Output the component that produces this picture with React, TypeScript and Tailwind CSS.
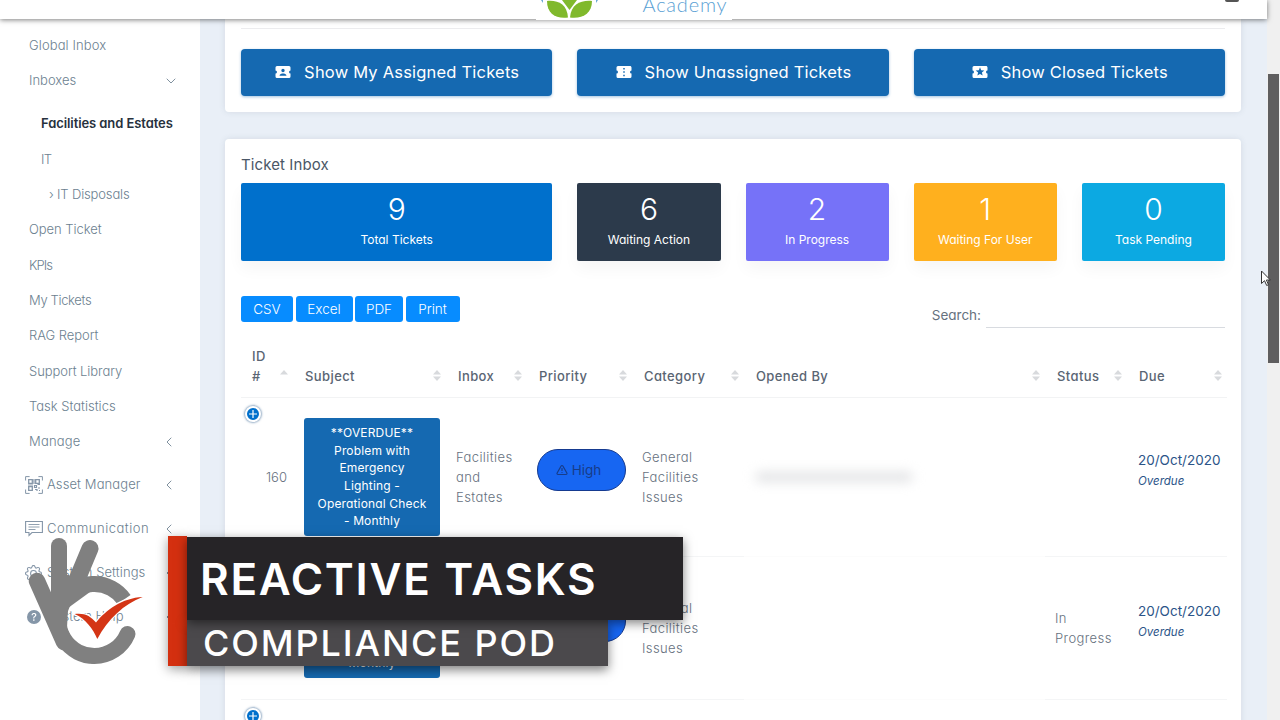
import React from 'react';
import clsx from 'clsx';
import { ChevronDown, ChevronLeft, TriangleAlert } from 'lucide-react';
import { BsGear, BsQuestionCircleFill } from 'react-icons/bs';

/* ---------- icons ---------- */

const TICKET_PATHS = {
  account:
    'M20,12A2,2 0 0,0 22,14V18A2,2 0 0,1 20,20H4A2,2 0 0,1 2,18V14C3.11,14 4,13.1 4,12A2,2 0 0,0 2,10V6A2,2 0 0,1 4,4H20A2,2 0 0,1 22,6V10A2,2 0 0,0 20,12M16.5,16.25C16.5,14.75 13.5,14 12,14C10.5,14 7.5,14.75 7.5,16.25V17H16.5V16.25M12,12.25A2.25,2.25 0 0,0 14.25,10A2.25,2.25 0 0,0 12,7.75A2.25,2.25 0 0,0 9.75,10A2.25,2.25 0 0,0 12,12.25Z',
  confirmation:
    'M13,8.5H11V6.5H13V8.5M13,13H11V11H13V13M13,17.5H11V15.5H13V17.5M22,10V6C22,4.89 21.1,4 20,4H4A2,2 0 0,0 2,6V10C3.11,10 4,10.9 4,12A2,2 0 0,1 2,14V18A2,2 0 0,0 4,20H20A2,2 0 0,0 22,18V14A2,2 0 0,1 20,12A2,2 0 0,1 22,10Z',
  star: 'M15.58,16.8L12,14.5L8.42,16.8L9.5,12.68L6.21,10L10.46,9.74L12,5.8L13.54,9.74L17.79,10L14.5,12.68M20,12C20,10.89 20.9,10 22,10V6C22,4.89 21.1,4 20,4H4A2,2 0 0,0 2,6V10C3.11,10 4,10.9 4,12A2,2 0 0,1 2,14V18A2,2 0 0,0 4,20H20A2,2 0 0,0 22,18V14C20.89,14 20,13.1 20,12Z',
};

function TicketIcon({ kind }: { kind: keyof typeof TICKET_PATHS }) {
  return (
    <svg width="18" height="18" viewBox="0 0 24 24" fill="currentColor" fillRule="evenodd">
      <path d={TICKET_PATHS[kind]} />
    </svg>
  );
}

function AssetIcon() {
  return (
    <svg width="18" height="18" viewBox="0 0 18 18" fill="none" stroke="currentColor">
      <path d="M.6 4.5V.6h4M13.4.6h4v3.9M17.4 13.5v3.9h-4M4.6 17.4h-4v-3.9" />
      <path d="M3.7 3.7h3.6v3.6H3.7zM10.7 3.7h3.6v3.6h-3.6zM3.7 10.7h3.6v3.6H3.7z" strokeWidth="1.3" />
      <path d="M9 3v5M3 9h5M9.5 9.5h2v2h-2zM12.5 8.5H15M13 12h2M10 13.5h2V15M14 14.5h1" strokeWidth="1.2" />
    </svg>
  );
}

function MessageIcon() {
  return (
    <svg width="18" height="17" viewBox="0 0 18 17" fill="none" stroke="currentColor">
      <path d="M.6 1.5h16.8v11H7l-3 3v-3H.6z" strokeWidth="1.1" />
      <path d="M3.5 4.5h11M3.5 7h11M3.5 9.5h7" strokeWidth=".9" />
    </svg>
  );
}

function SortIcon({ ascending }: { ascending?: boolean }) {
  return (
    <svg width="8" height="11" viewBox="0 0 8 11" className="fill-[#d8dadd]">
      <path d="M4 0l4 4.5H0z" />
      {!ascending && <path d="M4 11L0 6.5h8z" />}
    </svg>
  );
}

function HandLogo() {
  return (
    <svg width="116" height="130" viewBox="28 536 116 130" fill="none">
      <g stroke="#808080" strokeLinecap="round">
        <path d="M59 546V600" strokeWidth="16" />
        <path d="M90 548.5L76 582" strokeWidth="17" />
        <path d="M37 581L64 642" strokeWidth="16.5" />
      </g>
      <path d="M52 575H69L74 580 88 577 90 592 68 608 67 628 74 646 60 648 45 600 52 594z" fill="#808080" />
      <path d="M124 599.5A36 36 0 1 0 94.5 656" stroke="#808080" strokeWidth="16" />
      <path d="M94.5 656A36 36 0 0 0 127.5 634" stroke="#808080" strokeWidth="16" strokeLinecap="round" />
      <path
        d="M74.5 614C84 612.5 91 616 96 622.5 106 610 122 598 142.7 597 124 604 108 619 97.3 639 93 629 86 619 74.5 614z"
        fill="#d43515"
        stroke="#fff"
        strokeWidth="2.4"
        paintOrder="stroke"
      />
    </svg>
  );
}

/* ---------- chrome ---------- */

function TopBar() {
  return (
    <header className="relative z-10 flex h-[19px] w-[1267px] justify-center bg-white shadow-[0_1px_5px_rgba(0,0,0,0.5)]">
      <div className="flex h-5 w-[196px] items-start overflow-hidden bg-white">
        <svg width="66" height="20" viewBox="535 0 66 20" className="shrink-0">
          <path d="M540 0l2 3V0zM597 0l-2 3V0z" fill="#6ba9d6" />
          <path d="M546 1C557 0 566 4 567 17.5 555 19 546 14 546 1z" fill="#80b92c" />
          <path d="M591 1C580 0 570 4 569 17.5 581 19 591 14 591 1z" fill="#80b92c" />
          <path d="M561 0H576L568.5 10z" fill="#80b92c" />
        </svg>
        <span className="-mt-[9px] ml-[41px] font-['Lato'] text-[20px] font-light leading-[27px] tracking-[0.8px] text-[#5a9fd4]">
          Academy
        </span>
      </div>
      <span className="absolute right-[28px] top-0 h-[1.5px] w-3.5 rounded-b-full bg-[#555]" />
    </header>
  );
}

interface NavItemProps {
  label: string;
  indent?: string;
  active?: boolean;
  chevron?: 'down' | 'left';
  track?: string;
}

function NavItem({ label, indent = 'pl-[29px]', active, chevron, track }: NavItemProps) {
  return (
    <li className={clsx('flex h-[35.3px] items-center justify-between', indent)}>
      <span className={clsx(active ? 'font-semibold text-[#27313d]' : 'font-light', track)}>{label}</span>
      {chevron === 'down' && <ChevronDown size={16} strokeWidth={1.3} className="mr-[21px]" />}
      {chevron === 'left' && <ChevronLeft size={16} strokeWidth={1.3} className="mr-[23px]" />}
    </li>
  );
}

function SectionItem({ icon, label, track }: { icon: React.ReactNode; label: string; track?: string }) {
  return (
    <li className="flex h-[44.2px] items-center pl-[25px]">
      <span className="flex w-[22px] text-[#8596a8]">{icon}</span>
      <span className={clsx('grow font-light', track)}>{label}</span>
      <ChevronLeft size={16} strokeWidth={1.3} className="mr-[23px]" />
    </li>
  );
}

function Sidebar() {
  return (
    <nav className="w-[200px] shrink-0 bg-white pt-[9px] text-[13px] text-[#6c7f90]">
      <ul>
        <NavItem label="Global Inbox" track="tracking-[0.1px]" />
        <NavItem label="Inboxes" chevron="down" />
      </ul>
      <ul className="pt-2">
        <NavItem label="Facilities and Estates" indent="pl-[41px]" active track="tracking-[-0.08px]" />
        <NavItem label="IT" indent="pl-[41px]" track="tracking-[-0.6px]" />
        <NavItem label="› IT Disposals" indent="pl-[49px]" track="tracking-[-0.15px]" />
      </ul>
      <ul>
        <NavItem label="Open Ticket" track="tracking-[-0.05px]" />
        <NavItem label="KPIs" track="tracking-[-0.9px]" />
        <NavItem label="My Tickets" track="tracking-[-0.35px]" />
        <NavItem label="RAG Report" track="tracking-[-0.05px]" />
        <NavItem label="Support Library" track="tracking-[-0.07px]" />
        <NavItem label="Task Statistics" />
        <NavItem label="Manage" chevron="left" track="tracking-[0.2px]" />
      </ul>
      <ul className="pt-[3px]">
        <SectionItem icon={<AssetIcon />} label="Asset Manager" track="tracking-[0.1px]" />
        <SectionItem icon={<MessageIcon />} label="Communication" track="tracking-[0.5px]" />
        <SectionItem icon={<BsGear size={17} />} label="System Settings" track="tracking-[0.1px]" />
        <SectionItem icon={<BsQuestionCircleFill size={14} className="ml-0.5" />} label="System Help" />
      </ul>
    </nav>
  );
}

function Scrollbar() {
  return (
    <div className="absolute right-0 top-0 h-full w-[13px] bg-[#f0f0f0] pl-px pt-[74px]">
      <div className="h-[289px] w-[11px] bg-[#5f5e5f]" />
    </div>
  );
}

/* ---------- content ---------- */

const FILTERS = [
  { label: 'Show My Assigned Tickets', kind: 'account' },
  { label: 'Show Unassigned Tickets', kind: 'confirmation' },
  { label: 'Show Closed Tickets', kind: 'star' },
] as const;

const STATS = [
  { value: 9, label: 'Total Tickets', className: 'col-span-2 bg-[#0070cc]' },
  { value: 6, label: 'Waiting Action', className: 'bg-[#2c3a4b]' },
  { value: 2, label: 'In Progress', className: 'bg-[#7672f8]' },
  { value: 1, label: 'Waiting For User', className: 'bg-[#ffb01e]' },
  { value: 0, label: 'Task Pending', className: 'bg-[#0ca9e2]' },
];

const EXPORTS = [
  { label: 'CSV', width: 'w-[52px]' },
  { label: 'Excel', width: 'w-[57px]' },
  { label: 'PDF', width: 'w-[48px]' },
  { label: 'Print', width: 'w-[54px]' },
];

const COLUMNS = ['ID #', 'Subject', 'Inbox', 'Priority', 'Category', 'Opened By', 'Status', 'Due'];

interface Ticket {
  id?: string;
  subject: string[];
  inbox?: string;
  openedBy?: boolean;
  status?: string;
  height: string;
}

const TICKETS: Ticket[] = [
  {
    id: '160',
    subject: ['**OVERDUE**', 'Problem with', 'Emergency', 'Lighting -', 'Operational Check', '- Monthly'],
    inbox: 'Facilities and Estates',
    openedBy: true,
    height: 'h-[159px]',
  },
  {
    subject: ['', '', '', '', 'Monthly'],
    status: 'In Progress',
    height: 'h-[143px]',
  },
];

function ExpandButton() {
  return (
    <span className="absolute left-[3.5px] top-[8px] flex size-4 items-center justify-center rounded-full border-2 border-white bg-[#0070cc] shadow-[0_0_2px_1px_rgba(80,120,160,0.6)]">
      <svg width="8" height="8" viewBox="0 0 8 8" stroke="#fff" strokeWidth="1.2">
        <path d="M4 0v8M0 4h8" />
      </svg>
    </span>
  );
}

function TicketRow({ ticket }: { ticket: Ticket }) {
  return (
    <tr
      className={clsx(
        'font-light tracking-[0.4px] text-[#66717e] [&>td]:border-b [&>td]:border-[#f4f5f6]',
        ticket.height
      )}
    >
      <td className="relative pl-[25px] tracking-normal">
        <ExpandButton />
        {ticket.id}
      </td>
      <td className="pl-[11px]">
        <div className="w-[136px] rounded-[3px] bg-[#1569b1] py-[6px] text-center text-[12px] font-normal leading-[17.6px] tracking-[0.15px] text-white">
          {ticket.subject.map((line, i) => (
            <div key={i} className="h-[17.6px]">
              {line}
            </div>
          ))}
        </div>
      </td>
      <td className="pl-[10px] pr-3">{ticket.inbox}</td>
      <td className="pl-[10px]">
        <div className="-mt-[14px] flex h-[42px] w-[89px] items-center justify-center gap-1 rounded-full border border-[#153a90] bg-[#1766f2] pr-1.5 tracking-normal text-[#173c88]">
          <TriangleAlert size={12} strokeWidth={2.4} />
          <span className="text-[13.5px] font-normal">High</span>
        </div>
      </td>
      <td className="pl-[10px] pr-[30px]">General Facilities Issues</td>
      <td className="border-[#fcfcfc]! pl-[11px]">
        {ticket.openedBy && <div className="h-2.5 w-[158px] rounded-full bg-[#e2e3e5] blur-[6px]" />}
      </td>
      <td className="pl-[10px] pr-3">{ticket.status}</td>
      <td className="pl-[11px] font-normal tracking-normal text-[#2b5488]">
        <div className="-mt-[13px] text-[13.5px]">20/Oct/2020</div>
        <div className="mt-px text-[11.5px] italic">Overdue</div>
      </td>
    </tr>
  );
}

function TicketTable() {
  return (
    <table className="mt-1 w-[986px] table-fixed border-separate border-spacing-0 text-left text-[13px] leading-5">
      <colgroup>
        <col className="w-[52px]" />
        <col className="w-[153px]" />
        <col className="w-[81px]" />
        <col className="w-[105px]" />
        <col className="w-[112px]" />
        <col className="w-[301px]" />
        <col className="w-[82px]" />
        <col className="w-[100px]" />
      </colgroup>
      <thead>
        <tr className="h-[62px]">
          {COLUMNS.map((name, i) => (
            <th
              key={name}
              className="border-b border-[#f2f3f4] pb-[11px] align-bottom font-medium tracking-[0.4px] text-[#5a6573]"
            >
              <div className={clsx('flex items-end justify-between pr-[5px]', i === 0 ? 'pl-[10px]' : 'pl-3')}>
                <span className={clsx(i === 0 && 'w-4 pl-px')}>{name}</span>
                <span className="pb-[5px]">
                  <SortIcon ascending={i === 0} />
                </span>
              </div>
            </th>
          ))}
        </tr>
      </thead>
      <tbody>
        {TICKETS.map((ticket, i) => (
          <TicketRow key={i} ticket={ticket} />
        ))}
        <tr className="h-[140px]">
          <td className="relative">
            <ExpandButton />
          </td>
        </tr>
      </tbody>
    </table>
  );
}

function LowerThird() {
  return (
    <div className="absolute left-[168px] top-[536px] flex h-[130px] text-white">
      <div className="w-[19px] bg-[#d43010] shadow-[0_3px_12px_rgba(0,0,0,0.4)]" />
      <div className="relative flex flex-col items-start pt-px">
        <div className="relative z-10 flex h-[83px] w-[496px] items-center bg-[#262427] pl-[13px] text-[44px] font-semibold tracking-[1.7px] shadow-[0_3px_10px_rgba(0,0,0,0.5)]">
          REACTIVE TASKS
        </div>
        <div className="flex h-[46px] w-[421px] items-center bg-[#4b494c] pl-4 text-[36px] font-medium tracking-[1.9px] shadow-[0_4px_10px_rgba(0,0,0,0.5)]">
          COMPLIANCE POD
        </div>
      </div>
    </div>
  );
}

export default function App() {
  return (
    <div className="relative h-[720px] w-[1280px] overflow-hidden bg-[#e9eff7] font-['Inter',sans-serif] [font-feature-settings:'cv11']">
      <TopBar />
      <div className="flex h-[1000px]">
        <Sidebar />
        <main className="ml-[25px] w-[1016px]">
          <section className="h-[93px] rounded-b-sm bg-white px-4 pt-[9px] shadow-[0_0_6px_rgba(60,70,90,0.12)]">
            <hr className="border-[#ececee]" />
            <div className="mt-5 grid grid-cols-3 gap-[25px]">
              {FILTERS.map(({ label, kind }) => (
                <button
                  key={label}
                  className="flex h-[47px] items-center justify-center gap-3 rounded-[4px] bg-[#1569b1] pb-px text-[16.5px] tracking-[0.2px] text-white shadow-[0_1px_3px_rgba(21,105,177,0.4)]"
                >
                  <TicketIcon kind={kind} />
                  {label}
                </button>
              ))}
            </div>
          </section>

          <section className="mt-[27px] h-[800px] rounded-t-sm bg-white px-4 pt-[15px] shadow-[0_0_6px_rgba(60,70,90,0.12)]">
            <h2 className="text-[15px] leading-[22px] tracking-[0.1px] text-[#4a5766]">Ticket Inbox</h2>
            <div className="mt-[7px] grid grid-cols-6 gap-[25px]">
              {STATS.map((stat) => (
                <div
                  key={stat.label}
                  className={clsx(
                    'h-[78px] rounded-[2px] pt-[7px] text-center text-white shadow-[0_8px_16px_rgba(0,0,0,0.04)]',
                    stat.className
                  )}
                >
                  <div className="text-[30px] font-light leading-[38px]">{stat.value}</div>
                  <div className="mt-1 text-[12px] leading-4">{stat.label}</div>
                </div>
              ))}
            </div>

            <div className="mt-[35px] flex h-[36px] items-start justify-between">
              <div className="flex gap-[2.5px]">
                {EXPORTS.map(({ label, width }) => (
                  <button
                    key={label}
                    className={clsx('h-[26px] rounded-[3px] bg-[#078cff] text-[13.5px] font-light text-white', width)}
                  >
                    {label}
                  </button>
                ))}
              </div>
              <label className="flex h-8 items-end gap-[5px] text-[13.5px] text-[#66717e]">
                <span className="pb-[3px]">Search:</span>
                <span className="h-8 w-[239px] border-b border-[#d8dbe0]" />
              </label>
            </div>

            <TicketTable />
          </section>
        </main>
      </div>

      <Scrollbar />
      <svg className="absolute left-[1260px] top-[270px]" width="12" height="18" viewBox="0 0 12 18">
        <path d="M1.5 1v12.5l3-2.8 2.2 4.8 1.8-.8-2.1-4.7h4z" fill="#fff" stroke="#333" />
      </svg>
      <div className="absolute left-[28px] top-[536px]">
        <HandLogo />
      </div>
      <LowerThird />
    </div>
  );
}
